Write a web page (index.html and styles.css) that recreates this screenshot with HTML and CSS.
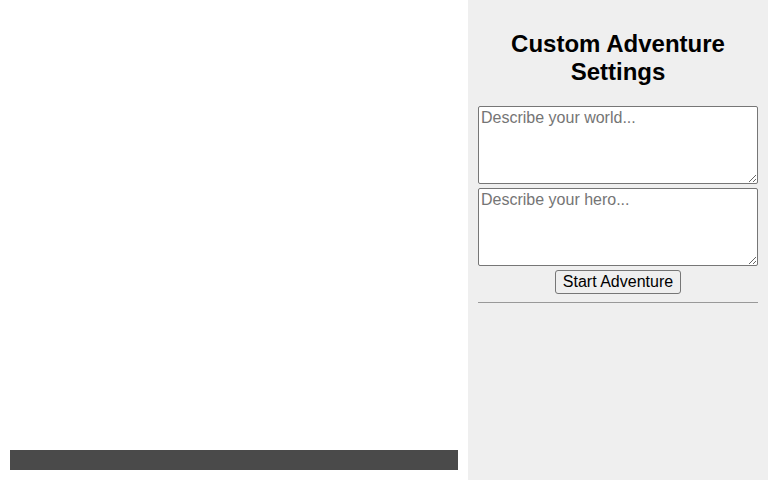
FILE: index.html
```html
<!DOCTYPE html>
<html>
<head>
<meta charset="utf-8">
<link rel="stylesheet" href="styles.css">
</head>
<body>
<div class="app">
  <main class="game">
    <div class="output"></div>
    <div class="bar"></div>
  </main>
  <aside class="settings">
    <h2 class="title">Custom Adventure Settings</h2>
    <textarea class="field" placeholder="Describe your world..."></textarea>
    <textarea class="field" placeholder="Describe your hero..."></textarea>
    <div class="actions"><button class="start">Start Adventure</button></div>
    <hr class="divider">
  </aside>
</div>
</body>
</html>
```
FILE: styles.css
```css
html, body {
  margin: 0;
  height: 100%;
  font-family: "Liberation Sans", Arial, sans-serif;
}
.app {
  display: flex;
  height: 100vh;
}
.game {
  flex: 1;
  display: flex;
  flex-direction: column;
  padding: 10px;
  background: #fff;
}
.output {
  flex: 1;
}
.bar {
  height: 20px;
  background: #4a4a4a;
}
.settings {
  width: 300px;
  box-sizing: border-box;
  padding: 10px;
  background: #efefef;
}
.title {
  margin: 20px 0;
  font-size: 24px;
  line-height: 28px;
  text-align: center;
  font-weight: bold;
  color: #000;
}
.field {
  display: block;
  box-sizing: border-box;
  width: 280px;
  height: 78px;
  margin: 0 0 4px;
  padding: 2px;
  font-family: "Liberation Sans", Arial, sans-serif;
  font-size: 16px;
  border: 1px solid #767676;
  border-radius: 2px;
  background: #fff;
}
.field::placeholder {
  color: #757575;
}
.actions {
  text-align: center;
}
.start {
  font-family: "Liberation Sans", Arial, sans-serif;
  font-size: 16px;
  height: 24px;
  padding: 1px 7px;
  border: 1px solid #767676;
  border-radius: 3px;
  background: #efefef;
  color: #000;
}
.divider {
  margin: 8px 0;
  border: 0;
  border-top: 1px solid #999;
}
```
